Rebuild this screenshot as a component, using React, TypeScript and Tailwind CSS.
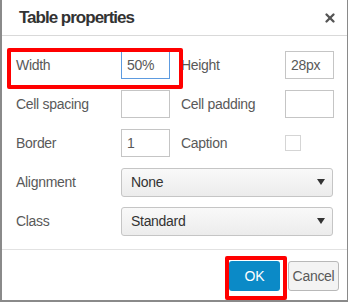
import { X } from 'lucide-react';

function TextBox({ value, focused }: { value?: string; focused?: boolean }) {
  return (
    <div
      className={`w-[49px] h-[28px] border ${
        focused ? 'border-[#5d9be0]' : 'border-[#c5c5c5]'
      } bg-white px-[5px] flex items-center text-[14px] tracking-[-0.3px] text-[#595959]`}
    >
      {value}
    </div>
  );
}

function SelectBox({ value }: { value: string }) {
  return (
    <div className="w-[212px] h-[29px] border border-[#c5c5c5] rounded-[3px] bg-gradient-to-b from-[#f9f9f9] to-[#ececec] flex items-center justify-between pl-[9px] pr-[7px] text-[14px] tracking-[-0.3px] text-[#333]">
      <span>{value}</span>
      <span className="w-0 h-0 border-l-[4px] border-r-[4px] border-t-[6px] border-l-transparent border-r-transparent border-t-[#333]" />
    </div>
  );
}

function Label({ children, w }: { children: React.ReactNode; w: string }) {
  return <div className={`${w} text-[14px] tracking-[-0.3px] text-[#595959]`}>{children}</div>;
}

export default function App() {
  return (
    <div
      className="w-[350px] h-[303px] bg-white overflow-hidden"
      style={{ fontFamily: '"Liberation Sans", Arial, sans-serif' }}
    >
      <div className="w-[348px] h-[302px] bg-white border-l-2 border-r border-b-2 border-[#8a8a8a] flex flex-col relative">
        {/* Header */}
        <div className="h-[36px] border-b border-[#d9d9d9] flex items-center justify-between pl-[17px] pr-[10px]">
          <span className="text-[17px] font-bold tracking-[-1px] text-[#333]">Table properties</span>
          <X className="w-[14px] h-[14px] text-[#555]" strokeWidth={4} />
        </div>

        {/* Body */}
        <div className="flex-1 flex flex-col gap-[11px] pt-[15px] pl-[14px]">
          <div className="flex items-center h-[28px]">
            <Label w="w-[105px]">Width</Label>
            <TextBox value="50%" focused />
            <div className="w-[11px]" />
            <Label w="w-[104px]">Height</Label>
            <TextBox value="28px" />
          </div>
          <div className="flex items-center h-[28px]">
            <Label w="w-[105px]">Cell spacing</Label>
            <TextBox />
            <div className="w-[11px]" />
            <Label w="w-[104px]">Cell padding</Label>
            <TextBox />
          </div>
          <div className="flex items-center h-[28px]">
            <Label w="w-[105px]">Border</Label>
            <TextBox value="1" />
            <div className="w-[11px]" />
            <Label w="w-[104px]">Caption</Label>
            <div className="w-[16px] h-[16px] border border-[#d5d5d5] bg-white" />
          </div>
          <div className="flex items-center h-[28px]">
            <Label w="w-[105px]">Alignment</Label>
            <SelectBox value="None" />
          </div>
          <div className="flex items-center h-[28px]">
            <Label w="w-[105px]">Class</Label>
            <SelectBox value="Standard" />
          </div>
        </div>

        {/* Footer */}
        <div className="h-[51px] border-t border-[#e2e2e2] flex items-start justify-end gap-[8px] pt-[11px] pr-[8px]">
          <button className="w-[51px] h-[30px] bg-[#0b8ac7] rounded-[3px] text-white text-[14px]">OK</button>
          <button className="w-[51px] h-[30px] bg-[#f3f3f3] border border-[#b8b8b8] rounded-[3px] text-[#595959] text-[14px] tracking-[-0.3px]">
            Cancel
          </button>
        </div>

        {/* Annotation highlights */}
        <div className="absolute left-[5px] top-[48px] w-[176px] h-[41px] border-[4px] border-[#ff0000] rounded-[2px] pointer-events-none" />
        <div className="absolute left-[223px] top-[256px] w-[62px] h-[44px] border-[4px] border-[#ff0000] rounded-[2px] pointer-events-none" />
      </div>
    </div>
  );
}
